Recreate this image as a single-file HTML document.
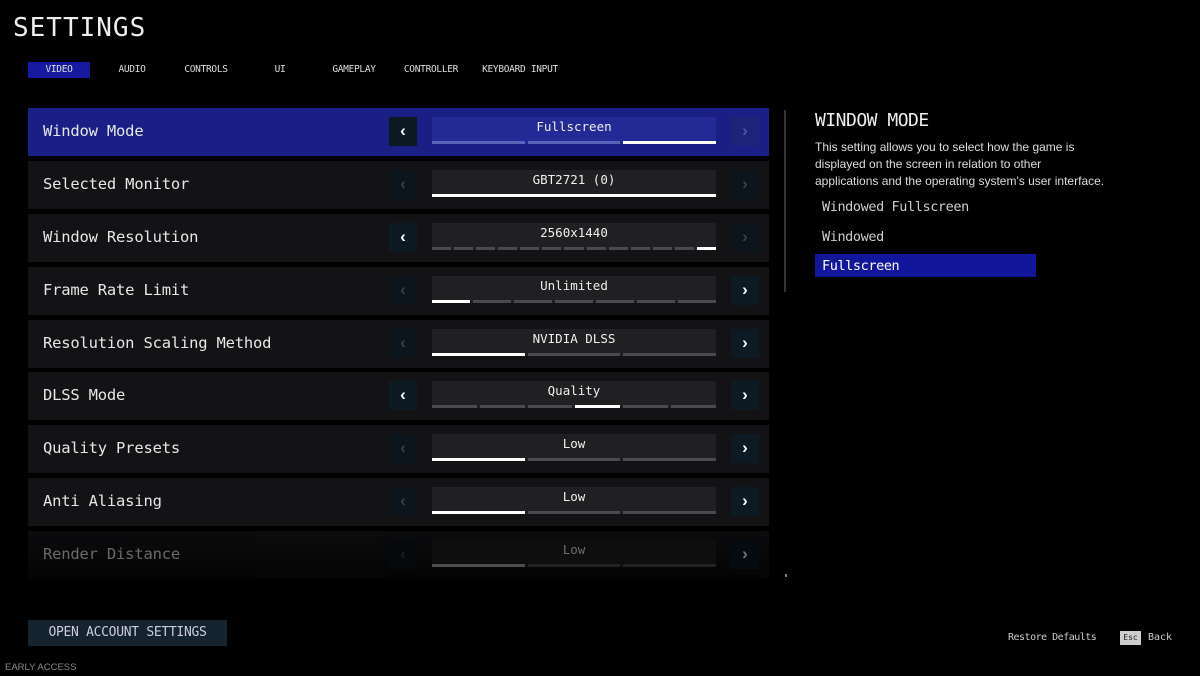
<!DOCTYPE html>
<html><head><style>
*{margin:0;padding:0;box-sizing:border-box}
body{width:1200px;height:676px;background:#000;position:relative;overflow:hidden;font-family:"DejaVu Sans Mono","Liberation Mono",monospace;color:#e8e8e8}
.abs{position:absolute}
h1{position:absolute;left:13px;top:13px;font-size:26px;font-weight:normal;letter-spacing:1px;color:#eee}
.tab{position:absolute;top:62px;height:16px;font-size:9.5px;line-height:16px;text-align:center;color:#ddd;white-space:nowrap;letter-spacing:-0.3px}
.row{position:absolute;left:28px;width:741px;height:48px;background:#131316}
.row.sel{background:#1a1f85}
.lab{position:absolute;left:15px;top:14px;font-size:15.5px;color:#e6e6e6;letter-spacing:-0.2px}
.btn{position:absolute;top:9px;width:28px;height:29px;background:#0d1a24;color:#fff;font-size:17px;text-align:center;line-height:27px;font-family:"Liberation Sans",sans-serif;font-weight:bold}
.btn.dis{color:#2e4352;background:#0c151c}
.val{position:absolute;left:404px;top:9px;width:284px;height:27px;background:#202022;font-size:12.5px;text-align:center;line-height:20px;color:#eee}
.sel .val{background:#232a95}
.bar{position:absolute;left:404px;top:33px;width:284px;height:3px;display:flex;gap:3px}
.bar i{flex:1;background:#4a4a4e}
.sel .bar i{background:#5a63b8}
.bar i.on{background:#fff}
</style></head><body>
<h1>SETTINGS</h1>
<div class="tab" style="left:28px;width:62px;background:#1719a0">VIDEO</div>
<div class="tab" style="left:110px;width:44px">AUDIO</div>
<div class="tab" style="left:178px;width:56px">CONTROLS</div>
<div class="tab" style="left:268px;width:24px">UI</div>
<div class="tab" style="left:326px;width:56px">GAMEPLAY</div>
<div class="tab" style="left:398px;width:66px">CONTROLLER</div>
<div class="tab" style="left:478px;width:84px">KEYBOARD INPUT</div>

<div class="row sel" style="top:108px"><div class="lab">Window Mode</div><div class="btn" style="left:361px">&lsaquo;</div><div class="val">Fullscreen</div><div class="bar"><i></i><i></i><i class="on"></i></div><div class="btn dis" style="left:703px;background:#1b2478;color:#4a56a8">&rsaquo;</div></div>
<div class="row" style="top:161px"><div class="lab">Selected Monitor</div><div class="btn dis" style="left:361px">&lsaquo;</div><div class="val">GBT2721 (0)</div><div class="bar"><i class="on"></i></div><div class="btn dis" style="left:703px">&rsaquo;</div></div>
<div class="row" style="top:214px"><div class="lab">Window Resolution</div><div class="btn" style="left:361px">&lsaquo;</div><div class="val">2560x1440</div><div class="bar"><i></i><i></i><i></i><i></i><i></i><i></i><i></i><i></i><i></i><i></i><i></i><i></i><i class="on"></i></div><div class="btn dis" style="left:703px">&rsaquo;</div></div>
<div class="row" style="top:267px"><div class="lab">Frame Rate Limit</div><div class="btn dis" style="left:361px">&lsaquo;</div><div class="val">Unlimited</div><div class="bar"><i class="on"></i><i></i><i></i><i></i><i></i><i></i><i></i></div><div class="btn" style="left:703px">&rsaquo;</div></div>
<div class="row" style="top:320px"><div class="lab">Resolution Scaling Method</div><div class="btn dis" style="left:361px">&lsaquo;</div><div class="val">NVIDIA DLSS</div><div class="bar"><i class="on"></i><i></i><i></i></div><div class="btn" style="left:703px">&rsaquo;</div></div>
<div class="row" style="top:372px"><div class="lab">DLSS Mode</div><div class="btn" style="left:361px">&lsaquo;</div><div class="val">Quality</div><div class="bar"><i></i><i></i><i></i><i class="on"></i><i></i><i></i></div><div class="btn" style="left:703px">&rsaquo;</div></div>
<div class="row" style="top:425px"><div class="lab">Quality Presets</div><div class="btn dis" style="left:361px">&lsaquo;</div><div class="val">Low</div><div class="bar"><i class="on"></i><i></i><i></i></div><div class="btn" style="left:703px">&rsaquo;</div></div>
<div class="row" style="top:478px"><div class="lab">Anti Aliasing</div><div class="btn dis" style="left:361px">&lsaquo;</div><div class="val">Low</div><div class="bar"><i class="on"></i><i></i><i></i></div><div class="btn" style="left:703px">&rsaquo;</div></div>
<div class="row" style="top:531px;opacity:.45;background:linear-gradient(#1a1a1e,#0a0a0c)"><div class="lab">Render Distance</div><div class="btn dis" style="left:361px">&lsaquo;</div><div class="val">Low</div><div class="bar"><i class="on" style="background:#aaa"></i><i></i><i></i></div><div class="btn" style="left:703px">&rsaquo;</div></div>

<div class="abs" style="left:784px;top:110px;width:2px;height:182px;background:#333"></div>
<div class="abs" style="left:785px;top:574px;width:2px;height:3px;background:#777"></div>

<div class="abs" style="left:815px;top:110px;font-size:18px;color:#eee;letter-spacing:-0.5px">WINDOW MODE</div>
<div class="abs" style="left:815px;top:139px;width:340px;white-space:nowrap;font-family:'Liberation Sans',sans-serif;font-size:12px;line-height:17px;color:#ddd">This setting allows you to select how the game is<br>displayed on the screen in relation to other<br>applications and the operating system's user interface.</div>
<div class="abs" style="left:822px;top:199px;font-size:13.5px;color:#ccc;letter-spacing:-0.4px">Windowed Fullscreen</div>
<div class="abs" style="left:822px;top:229px;font-size:13.5px;color:#ccc;letter-spacing:-0.4px">Windowed</div>
<div class="abs" style="left:815px;top:254px;width:221px;height:23px;background:#12169a"></div>
<div class="abs" style="left:822px;top:258px;font-size:13.5px;color:#fff;letter-spacing:-0.4px">Fullscreen</div>

<div class="abs" style="left:28px;top:620px;width:199px;height:26px;background:#15232e;font-size:13px;line-height:26px;text-align:center;color:#ccd;letter-spacing:-0.3px">OPEN ACCOUNT SETTINGS</div>
<div class="abs" style="left:5px;top:662px;font-family:'Liberation Sans',sans-serif;font-size:9.5px;color:#888">EARLY ACCESS</div>
<div class="abs" style="left:1008px;top:632px;font-size:10px;color:#ccc;letter-spacing:-0.5px">Restore Defaults</div>
<div class="abs" style="left:1120px;top:631px;width:21px;height:14px;background:#ccc;color:#222;font-size:8px;line-height:14px;text-align:center">Esc</div>
<div class="abs" style="left:1148px;top:632px;font-size:10px;color:#ccc">Back</div>
</body></html>
